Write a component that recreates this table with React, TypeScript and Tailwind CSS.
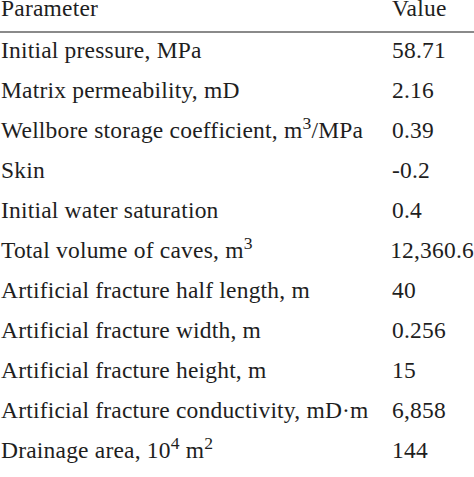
import React from 'react';

type Row = { label: React.ReactNode; value: string };

const rows: Row[] = [
  { label: 'Initial pressure, MPa', value: '58.71' },
  { label: 'Matrix permeability, mD', value: '2.16' },
  {
    label: (
      <>
        Wellbore storage coefficient, m<sup>3</sup>/MPa
      </>
    ),
    value: '0.39',
  },
  { label: 'Skin', value: '-0.2' },
  { label: 'Initial water saturation', value: '0.4' },
  {
    label: (
      <>
        Total volume of caves, m<sup>3</sup>
      </>
    ),
    value: '12,360.6',
  },
  { label: 'Artificial fracture half length, m', value: '40' },
  { label: 'Artificial fracture width, m', value: '0.256' },
  { label: 'Artificial fracture height, m', value: '15' },
  { label: 'Artificial fracture conductivity, mD·m', value: '6,858' },
  {
    label: (
      <>
        Drainage area, 10<sup>4</sup> m<sup>2</sup>
      </>
    ),
    value: '144',
  },
];

const App: React.FC = () => {
  return (
    <div className="w-[474px] h-[477px] overflow-hidden bg-white text-[#1e1e1e] font-['Liberation_Serif',serif] text-[23.5px] tracking-[0.2px]">
      {/* header - top of the text sits right at the crop edge, as in the source */}
      <div className="flex h-[33px] border-b-2 border-[#8a8a8a] leading-[16px]">
        <div className="w-[392px] pl-[1px]">Parameter</div>
        <div className="flex-1 whitespace-nowrap">Value</div>
      </div>

      {/* body */}
      <div className="flex flex-col">
        {rows.map((row, idx) => (
          <div key={idx} className="flex h-[40px] leading-[34px] whitespace-nowrap">
            <div className="w-[392px] pl-[1px]">{row.label}</div>
            <div className="flex-1">{row.value}</div>
          </div>
        ))}
      </div>
    </div>
  );
};

export default App;
